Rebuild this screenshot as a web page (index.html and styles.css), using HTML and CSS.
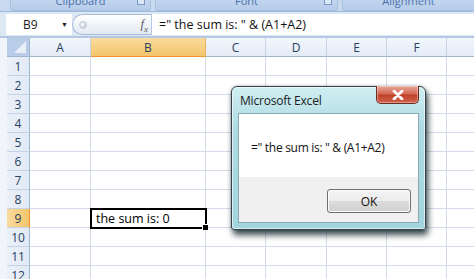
FILE: index.html
```html
<!DOCTYPE html>
<html>
<head>
<meta charset="utf-8">
<link rel="stylesheet" href="styles.css">
</head>
<body>
<div class="app">
  <div class="ribbon">
    <div class="grp g1"><span class="glabel">Clipboard</span><span class="launch"></span></div>
    <div class="grp g2"><span class="glabel">Font</span><span class="launch"></span></div>
    <div class="grp g3"><span class="glabel">Alignment</span></div>
  </div>
  <div class="fbar">
    <div class="namebox"><span class="nbtext">B9</span><span class="nbarrow">&#9660;</span></div>
    <div class="pill"><span class="knob"></span><span class="fx">f<sub>x</sub></span></div>
    <div class="formula">=" the sum is: " &amp; (A1+A2)</div>
  </div>
  <div class="sheet">
    <div class="grid">
      <div class="h corner"><svg width="22" height="18" viewBox="0 0 22 18"><polygon points="19,3 19,15 7,15" fill="#e9eff8"/></svg></div>
      <div class="h ch">A</div>
      <div class="h ch hsel">B</div>
      <div class="h ch">C</div>
      <div class="h ch">D</div>
      <div class="h ch">E</div>
      <div class="h ch">F</div>
      <div class="h ch last"></div>

      <div class="rh">1</div><div class="c"></div><div class="c"></div><div class="c"></div><div class="c"></div><div class="c"></div><div class="c"></div><div class="c"></div>
      <div class="rh">2</div><div class="c"></div><div class="c"></div><div class="c"></div><div class="c"></div><div class="c"></div><div class="c"></div><div class="c"></div>
      <div class="rh">3</div><div class="c"></div><div class="c"></div><div class="c"></div><div class="c"></div><div class="c"></div><div class="c"></div><div class="c"></div>
      <div class="rh">4</div><div class="c"></div><div class="c"></div><div class="c"></div><div class="c"></div><div class="c"></div><div class="c"></div><div class="c"></div>
      <div class="rh">5</div><div class="c"></div><div class="c"></div><div class="c"></div><div class="c"></div><div class="c"></div><div class="c"></div><div class="c"></div>
      <div class="rh">6</div><div class="c"></div><div class="c"></div><div class="c"></div><div class="c"></div><div class="c"></div><div class="c"></div><div class="c"></div>
      <div class="rh">7</div><div class="c"></div><div class="c"></div><div class="c"></div><div class="c"></div><div class="c"></div><div class="c"></div><div class="c"></div>
      <div class="rh">8</div><div class="c"></div><div class="c"></div><div class="c"></div><div class="c"></div><div class="c"></div><div class="c"></div><div class="c"></div>
      <div class="rh rsel">9</div><div class="c"></div><div class="c sel">the sum is: 0<span class="handle"></span></div><div class="c"></div><div class="c"></div><div class="c"></div><div class="c"></div><div class="c"></div>
      <div class="rh">10</div><div class="c"></div><div class="c"></div><div class="c"></div><div class="c"></div><div class="c"></div><div class="c"></div><div class="c"></div>
      <div class="rh">11</div><div class="c"></div><div class="c"></div><div class="c"></div><div class="c"></div><div class="c"></div><div class="c"></div><div class="c"></div>
      <div class="rh">12</div><div class="c"></div><div class="c"></div><div class="c"></div><div class="c"></div><div class="c"></div><div class="c"></div><div class="c"></div>
    </div>
  </div>

  <div class="dialog">
    <div class="titlebar">
      <span class="title">Microsoft Excel</span>
      <span class="close"><svg width="12" height="10" viewBox="0 0 12 10"><path d="M2 1 L10 9 M10 1 L2 9" stroke="#ffffff" stroke-width="2.8" stroke-linecap="round"/></svg></span>
    </div>
    <div class="dbody">
      <div class="msg">=" the sum is: " &amp; (A1+A2)</div>
      <div class="btnrow"><div class="okbtn">OK</div></div>
    </div>
  </div>
</div>
</body>
</html>
```
FILE: styles.css
```css
html, body {
  margin: 0;
  padding: 0;
}
body {
  width: 474px;
  height: 279px;
  overflow: hidden;
  background: #ffffff;
  font-family: "Open Sans", "Noto Sans", sans-serif;
}
.app {
  position: relative;
  width: 474px;
  height: 279px;
  overflow: hidden;
}

/* ribbon group labels */
.ribbon {
  height: 12px;
  display: flex;
  background: #c9daf0;
  border-bottom: 1px solid #9fb9db;
  box-sizing: border-box;
  padding-left: 10px;
  gap: 4px;
}
.grp {
  height: 11px;
  overflow: hidden;
  display: flex;
  justify-content: center;
  background: linear-gradient(#c3d6ef, #b6cbe8);
  border-radius: 0 0 3px 3px;
  border: 1px solid #a9c1e1;
  border-top: none;
  box-sizing: border-box;
  position: relative;
}
.g1 { width: 141px; }
.g2 { width: 183px; }
.g3 { flex: 1; border-right: none; }
.glabel {
  display: block;
  margin-top: -6px;
  font-size: 11px;
  line-height: 14px;
  color: #4a71ab;
}
.launch {
  position: absolute;
  right: 5px;
  top: 0;
  width: 6px;
  height: 4px;
  border: 1px solid #7a98c4;
  border-top: none;
  background: #dbe6f4;
}

/* formula bar */
.fbar {
  height: 26px;
  display: flex;
  background: #dde8f5;
  border-bottom: 2px solid #b4c8e3;
  box-sizing: border-box;
  padding: 2px 0 1px 6px;
}
.namebox {
  width: 66px;
  background: #ffffff;
  display: flex;
  align-items: center;
  box-sizing: border-box;
  padding-left: 17px;
  font-size: 12px;
  color: #1c1c1c;
}
.nbtext { flex: 1; }
.nbarrow {
  font-size: 7px;
  color: #222;
  margin-right: 4px;
}
.pill {
  width: 79px;
  background: linear-gradient(#ffffff, #e2e9f3);
  border: 1px solid #a9bcd6;
  border-right: none;
  border-radius: 11px 0 0 11px;
  box-sizing: border-box;
  display: flex;
  align-items: center;
  padding-left: 6px;
}
.knob {
  width: 6px;
  height: 6px;
  border-radius: 50%;
  background: radial-gradient(circle at 40% 40%, #ffffff, #aab8c8);
  border: 1px solid #c5cfdb;
}
.fx {
  margin-left: auto;
  margin-right: 3px;
  font-family: "Liberation Serif", serif;
  font-style: italic;
  font-size: 13px;
  color: #5a5a5a;
}
.fx sub {
  font-size: 9px;
}
.formula {
  flex: 1;
  background: #ffffff;
  border-left: 1px solid #b4c8e3;
  display: flex;
  align-items: center;
  padding-left: 7px;
  font-size: 12.5px;
  color: #111;
  white-space: nowrap;
}

/* sheet */
.sheet {
  padding-left: 7px;
  background: #f1f5fb;
}
.grid {
  display: grid;
  grid-template-columns: 23px 61px 115px 60px 61px 60px 60px 60px;
  grid-template-rows: 19px;
  grid-auto-rows: 19px;
  background: #ffffff;
}
.h {
  background: linear-gradient(#f3f7fc, #e3ebf6);
  border-right: 1px solid #c5d3e6;
  border-bottom: 1px solid #9eb6ce;
  box-sizing: border-box;
  display: flex;
  align-items: center;
  justify-content: center;
  font-size: 12px;
  color: #27415f;
}
.corner {
  background: #b9cde8;
  border-right: 1px solid #9eb6ce;
}
.corner svg { display: block; }
.hsel {
  background: linear-gradient(#fadb9f, #f2c56b);
  border-bottom: 1px solid #f29436;
  border-right: 1px solid #e9b25a;
}
.rh {
  background: linear-gradient(90deg, #eaf0f8, #e2eaf5);
  border-right: 1px solid #9eb6ce;
  border-bottom: 1px solid #c5d3e6;
  box-sizing: border-box;
  display: flex;
  align-items: center;
  justify-content: center;
  font-size: 12px;
  color: #27415f;
}
.rsel {
  background: linear-gradient(90deg, #fadb9f, #f2c56b);
  border-right: 1px solid #f29436;
}
.c {
  border-right: 1px solid #d4dbe8;
  border-bottom: 1px solid #d4dbe8;
  box-sizing: border-box;
}
.sel {
  position: relative;
  outline: 2px solid #000000;
  outline-offset: -1px;
  z-index: 1;
  display: flex;
  align-items: center;
  padding-left: 5px;
  font-size: 12.5px;
  color: #000;
  white-space: nowrap;
}
.handle {
  position: absolute;
  right: -3px;
  bottom: -3px;
  width: 5px;
  height: 5px;
  background: #000;
  border: 1px solid #fff;
  border-right: none;
  border-bottom: none;
}

/* dialog */
.dialog {
  position: absolute;
  left: 231px;
  top: 86px;
  width: 195px;
  height: 144px;
  box-sizing: border-box;
  border: 1px solid #36424a;
  border-radius: 6px 6px 3px 3px;
  background: linear-gradient(#cfeef2, #aedbe3 30%, #a3d5de);
  box-shadow: 2px 5px 6px rgba(10, 30, 35, 0.8), 0 0 3px rgba(0,0,0,0.3), inset 0 0 0 1px rgba(255,255,255,0.6);
  z-index: 5;
  display: flex;
  flex-direction: column;
  padding: 0 6px 6px 6px;
}
.titlebar {
  height: 26px;
  display: flex;
  align-items: flex-start;
  position: relative;
}
.title {
  margin-top: 5px;
  margin-left: 2px;
  font-size: 12px;
  letter-spacing: -0.2px;
  color: #1c1c1c;
}
.close {
  position: absolute;
  right: 0;
  top: -1px;
  width: 43px;
  height: 18px;
  box-sizing: border-box;
  border: 1px solid #6e2b22;
  border-top: none;
  border-radius: 0 0 5px 5px;
  background: linear-gradient(#e9a89a, #d36a55 45%, #c1412b 55%, #d0644d);
  box-shadow: inset 0 0 0 1px rgba(255,255,255,0.35);
  display: flex;
  align-items: center;
  justify-content: center;
}
.close svg { display: block; }
.dbody {
  flex: 1;
  background: #f0f0f0;
  border: 1px solid #89aab3;
  display: flex;
  flex-direction: column;
}
.msg {
  height: 63px;
  background: #ffffff;
  display: flex;
  align-items: center;
  padding-left: 12px;
  padding-top: 4px;
  box-sizing: border-box;
  font-size: 12px;
  letter-spacing: -0.3px;
  color: #111;
  white-space: nowrap;
}
.btnrow {
  flex: 1;
  display: flex;
  justify-content: flex-end;
  align-items: flex-start;
  padding: 12px 7px 0 0;
}
.okbtn {
  width: 84px;
  height: 24px;
  box-sizing: border-box;
  border: 1px solid #707070;
  border-radius: 3px;
  background: linear-gradient(#f4f4f4, #ececec 48%, #dcdcdc 52%, #d0d0d0);
  box-shadow: inset 0 0 0 1px #fbfbfb;
  display: flex;
  align-items: center;
  justify-content: center;
  font-size: 12px;
  color: #111;
}
```
